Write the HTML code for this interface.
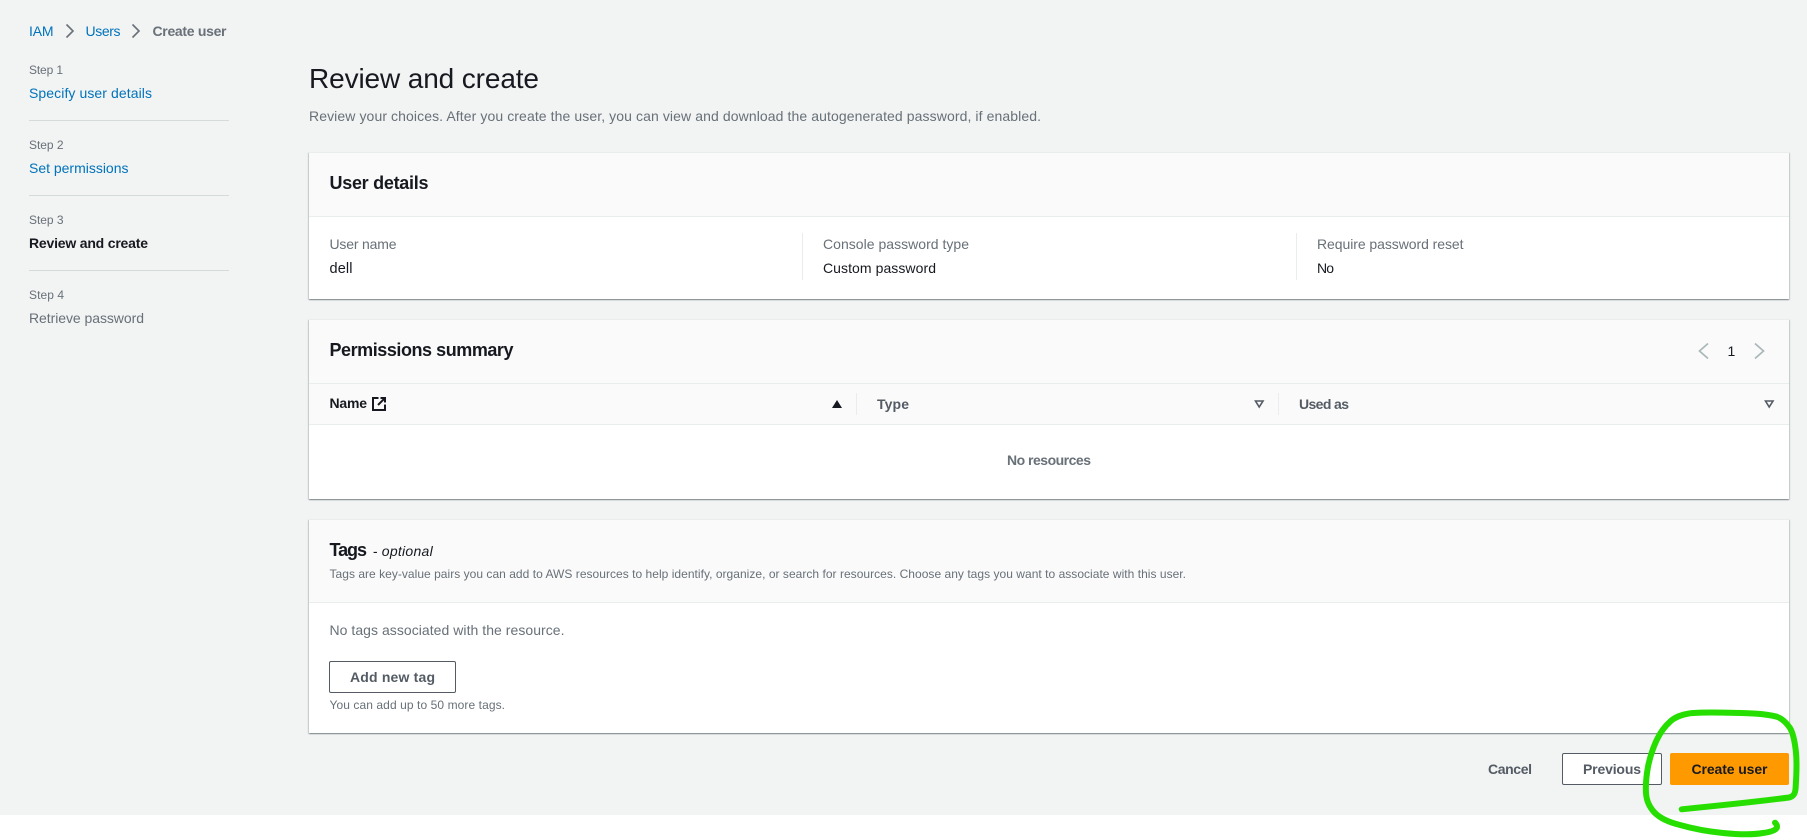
<!DOCTYPE html>
<html lang="en">
<head>
<meta charset="utf-8">
<title>Create user</title>
<style>
html,body{margin:0;padding:0;background:#fff}
body{position:relative;width:1807px;height:840px;overflow:hidden;font-family:"Liberation Sans",sans-serif}
.bg{position:absolute;left:0;top:0;width:1807px;height:815px;background:#f2f3f3}
.card{position:absolute;left:309px;width:1480px;background:#fff;box-shadow:0 1px 1px 0 rgba(0,28,36,.3),1px 1px 1px 0 rgba(0,28,36,.15),-1px 1px 1px 0 rgba(0,28,36,.15);border-top:1px solid #eaeded;box-sizing:border-box}
.head{position:absolute;left:0;right:0;top:0;background:#fafafa;border-bottom:1px solid #eaeded;box-sizing:border-box}
.rule{position:absolute;left:29px;width:200px;height:1px;background:#d5dbdb}
.vr{position:absolute;width:1px;background:#eaeded}
.btn{position:absolute;box-sizing:border-box;border-radius:2px}
.btn.o{background:#fff;border:1px solid #545b64}
.btn.p{background:#f90;border:1px solid #f90}
svg.top{position:absolute;left:0;top:0}
text{font-family:"Liberation Sans",sans-serif}
</style>
</head>
<body>
<div class="bg"></div>

<div class="rule" style="top:120px"></div>
<div class="rule" style="top:195px"></div>
<div class="rule" style="top:270px"></div>

<div class="card" style="top:152px;height:147px">
  <div class="head" style="height:64px"></div>
</div>
<div class="vr" style="left:802px;top:233px;height:47px"></div>
<div class="vr" style="left:1296px;top:233px;height:47px"></div>

<div class="card" style="top:319px;height:180px">
  <div class="head" style="height:64px"></div>
  <div class="head" style="top:64px;height:41px"></div>
</div>
<div class="vr" style="left:856px;top:393px;height:22px"></div>
<div class="vr" style="left:1278px;top:393px;height:22px"></div>

<div class="card" style="top:519px;height:214px">
  <div class="head" style="height:83px"></div>
</div>

<div class="btn o" style="left:329px;top:661px;width:127px;height:32px"></div>
<div class="btn o" style="left:1562px;top:753px;width:100px;height:32px"></div>
<div class="btn p" style="left:1670px;top:753px;width:119px;height:32px"></div>

<svg class="top" width="1807" height="840" viewBox="0 0 1807 840" xmlns="http://www.w3.org/2000/svg">
  <!-- breadcrumbs -->
  <text x="29" y="36" font-size="14" fill="#0073bb" textLength="24.5">IAM</text>
  <path d="M66.5 24.5 L73 31 L66.5 37.5" fill="none" stroke="#687078" stroke-width="1.6"/>
  <text x="85.5" y="36" font-size="14" fill="#0073bb" textLength="35">Users</text>
  <path d="M132.5 24.5 L139 31 L132.5 37.5" fill="none" stroke="#687078" stroke-width="1.6"/>
  <text x="152.5" y="36" font-size="14" font-weight="700" fill="#687078" textLength="74">Create user</text>

  <!-- steps -->
  <text x="29" y="74" font-size="12" fill="#687078" textLength="34">Step 1</text>
  <text x="29" y="98" font-size="14" fill="#0073bb" textLength="123">Specify user details</text>
  <text x="29" y="149" font-size="12" fill="#687078" textLength="34.5">Step 2</text>
  <text x="29" y="173" font-size="14" fill="#0073bb" textLength="99.5">Set permissions</text>
  <text x="29" y="224" font-size="12" fill="#687078" textLength="34.5">Step 3</text>
  <text x="29" y="248" font-size="14" font-weight="700" fill="#16191f" textLength="119">Review and create</text>
  <text x="29" y="299" font-size="12" fill="#687078" textLength="35">Step 4</text>
  <text x="29" y="323" font-size="14" fill="#687078" textLength="115">Retrieve password</text>

  <!-- title -->
  <text x="309" y="88" font-size="28" fill="#16191f" textLength="230">Review and create</text>
  <text x="309" y="121" font-size="14" fill="#687078" textLength="732">Review your choices. After you create the user, you can view and download the autogenerated password, if enabled.</text>

  <!-- user details -->
  <text x="329.5" y="189" font-size="18" font-weight="700" fill="#16191f" textLength="99">User details</text>
  <text x="329.5" y="249" font-size="14" fill="#687078" textLength="67">User name</text>
  <text x="329.5" y="273" font-size="14.5" fill="#16191f" textLength="23">dell</text>
  <text x="823" y="249" font-size="14" fill="#687078" textLength="146">Console password type</text>
  <text x="823" y="273" font-size="14" fill="#16191f" textLength="113">Custom password</text>
  <text x="1317" y="249" font-size="14" fill="#687078" textLength="146.5">Require password reset</text>
  <text x="1317" y="273" font-size="14" fill="#16191f" textLength="17">No</text>

  <!-- permissions -->
  <text x="329.5" y="356" font-size="18" font-weight="700" fill="#16191f" textLength="184">Permissions summary</text>
  <path d="M1708 343.5 L1699.5 351 L1708 358.5" fill="none" stroke="#aab7b8" stroke-width="1.7"/>
  <text x="1727.5" y="356" font-size="14" fill="#16191f" textLength="6">1</text>
  <path d="M1755 343.5 L1763.5 351 L1755 358.5" fill="none" stroke="#aab7b8" stroke-width="1.7"/>

  <text x="329.5" y="408" font-size="14" font-weight="700" fill="#16191f" textLength="37.5">Name</text>
  <path d="M378.5 398 H373 V410 H385 V404.5 M380.5 398 H385 V402.5 M385 398 L378 405" fill="none" stroke="#16191f" stroke-width="2"/>
  <path d="M837 400 L842 408 H832 Z" fill="#16191f"/>
  <text x="877" y="409" font-size="14" font-weight="700" fill="#545b64" textLength="32">Type</text>
  <path d="M1255.5 401 H1263 L1259.2 407 Z" fill="none" stroke="#545b64" stroke-width="1.6"/>
  <text x="1299" y="409" font-size="14" font-weight="700" fill="#545b64" textLength="50">Used as</text>
  <path d="M1765.5 401 H1773 L1769.2 407 Z" fill="none" stroke="#545b64" stroke-width="1.6"/>
  <text x="1007" y="465" font-size="14" font-weight="700" fill="#687078" textLength="84">No resources</text>

  <!-- tags -->
  <text x="329.5" y="556" font-size="18" font-weight="700" fill="#16191f" textLength="37.5">Tags</text>
  <text x="372.7" y="556" font-size="14" font-style="italic" fill="#16191f" textLength="60">- optional</text>
  <text x="329.5" y="578" font-size="12" fill="#687078" textLength="856.5">Tags are key-value pairs you can add to AWS resources to help identify, organize, or search for resources. Choose any tags you want to associate with this user.</text>
  <text x="329.5" y="635" font-size="14" fill="#687078" textLength="235">No tags associated with the resource.</text>
  <text x="350" y="682" font-size="14" font-weight="700" fill="#545b64" textLength="85">Add new tag</text>
  <text x="329.5" y="709" font-size="12" fill="#687078" textLength="175.5">You can add up to 50 more tags.</text>

  <!-- footer actions -->
  <text x="1488" y="774" font-size="14" font-weight="700" fill="#545b64" textLength="44">Cancel</text>
  <text x="1583" y="774" font-size="14" font-weight="700" fill="#545b64" textLength="58">Previous</text>
  <text x="1691.5" y="774" font-size="14" font-weight="700" fill="#16191f" textLength="76">Create user</text>

  <!-- green hand-drawn annotation -->
  <path d="M1681.7 809.3 C1715 806 1755 802 1789 797.5 C1794 796.5 1795.3 793 1795.6 788 C1796.5 775 1797 760 1795.7 750 C1794.5 740 1793 733 1790 728 C1786 722 1782 718.5 1776.7 716.7 C1765 713.5 1748 713 1730 712.7 C1715 712.5 1700 712 1690 713.3 C1681 714.8 1675 717 1670 721.7 C1664 727 1660 733 1656.7 740 C1653 748 1650 757 1648 766.7 C1646.5 775 1645.5 785 1646 793 C1646.5 801 1650 808 1655 813 C1661 819 1670 822.5 1680 825 C1694 829 1708 831.5 1723 833 C1738 834.5 1752 835 1763 833 C1770 832 1775 830.5 1776.7 828 C1777.5 826 1776.5 824 1775 822.7" fill="none" stroke="#26df00" stroke-width="6" stroke-linecap="round" stroke-linejoin="round"/>
</svg>
</body>
</html>
